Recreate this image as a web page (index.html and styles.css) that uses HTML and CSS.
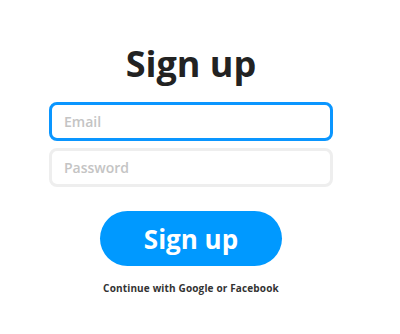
FILE: index.html
```html
<!DOCTYPE html>
<html lang="en">
<head>
    <meta charset="UTF-8">
    <meta name="viewport" content="width=device-width, initial-scale=1.0">
    <title>Sign up</title>
    <link rel="stylesheet" href="styles.css">
</head>
<body>

<div class="container">
    <h1>Sign up</h1>

    <form class="signup-form">
        <input type="email" class="field field-active" placeholder="Email">
        <input type="password" class="field" placeholder="Password">
        <button type="button" class="submit">Sign up</button>
    </form>

    <a class="alt-link" href="#">Continue with Google or Facebook</a>
</div>

</body>
</html>
```

FILE: styles.css
```css
body {
    font-family: "Open Sans", Arial, sans-serif;
    background-color: #ffffff;
    margin: 0;
    padding: 0;
}
.container {
    width: 284px;
    margin-left: 49px;
    padding-top: 40px;
    display: flex;
    flex-direction: column;
    align-items: center;
}
h1 {
    font-size: 36px;
    font-weight: 700;
    color: #222;
    margin: 0 0 14px 0;
    line-height: 48px;
}
.signup-form {
    width: 100%;
    display: flex;
    flex-direction: column;
    align-items: center;
    gap: 7px;
}
.field {
    box-sizing: border-box;
    width: 100%;
    height: 39px;
    padding: 0 12px;
    border: 3px solid #eeeeee;
    border-radius: 8px;
    font-family: "Open Sans", Arial, sans-serif;
    font-size: 14px;
    font-weight: 600;
    color: #333;
    outline: none;
}
.field::placeholder {
    color: #c4c4c4;
}
.field-active {
    border-color: #0a96ff;
}
.submit {
    margin-top: 17px;
    width: 182px;
    height: 55px;
    border: none;
    border-radius: 28px;
    background-color: #0099ff;
    color: #ffffff;
    font-family: "Open Sans", Arial, sans-serif;
    font-size: 26px;
    font-weight: 700;
    cursor: pointer;
}
.alt-link {
    margin-top: 15px;
    font-size: 10px;
    font-weight: 700;
    letter-spacing: 0.15px;
    color: #333;
    text-decoration: none;
}
```
